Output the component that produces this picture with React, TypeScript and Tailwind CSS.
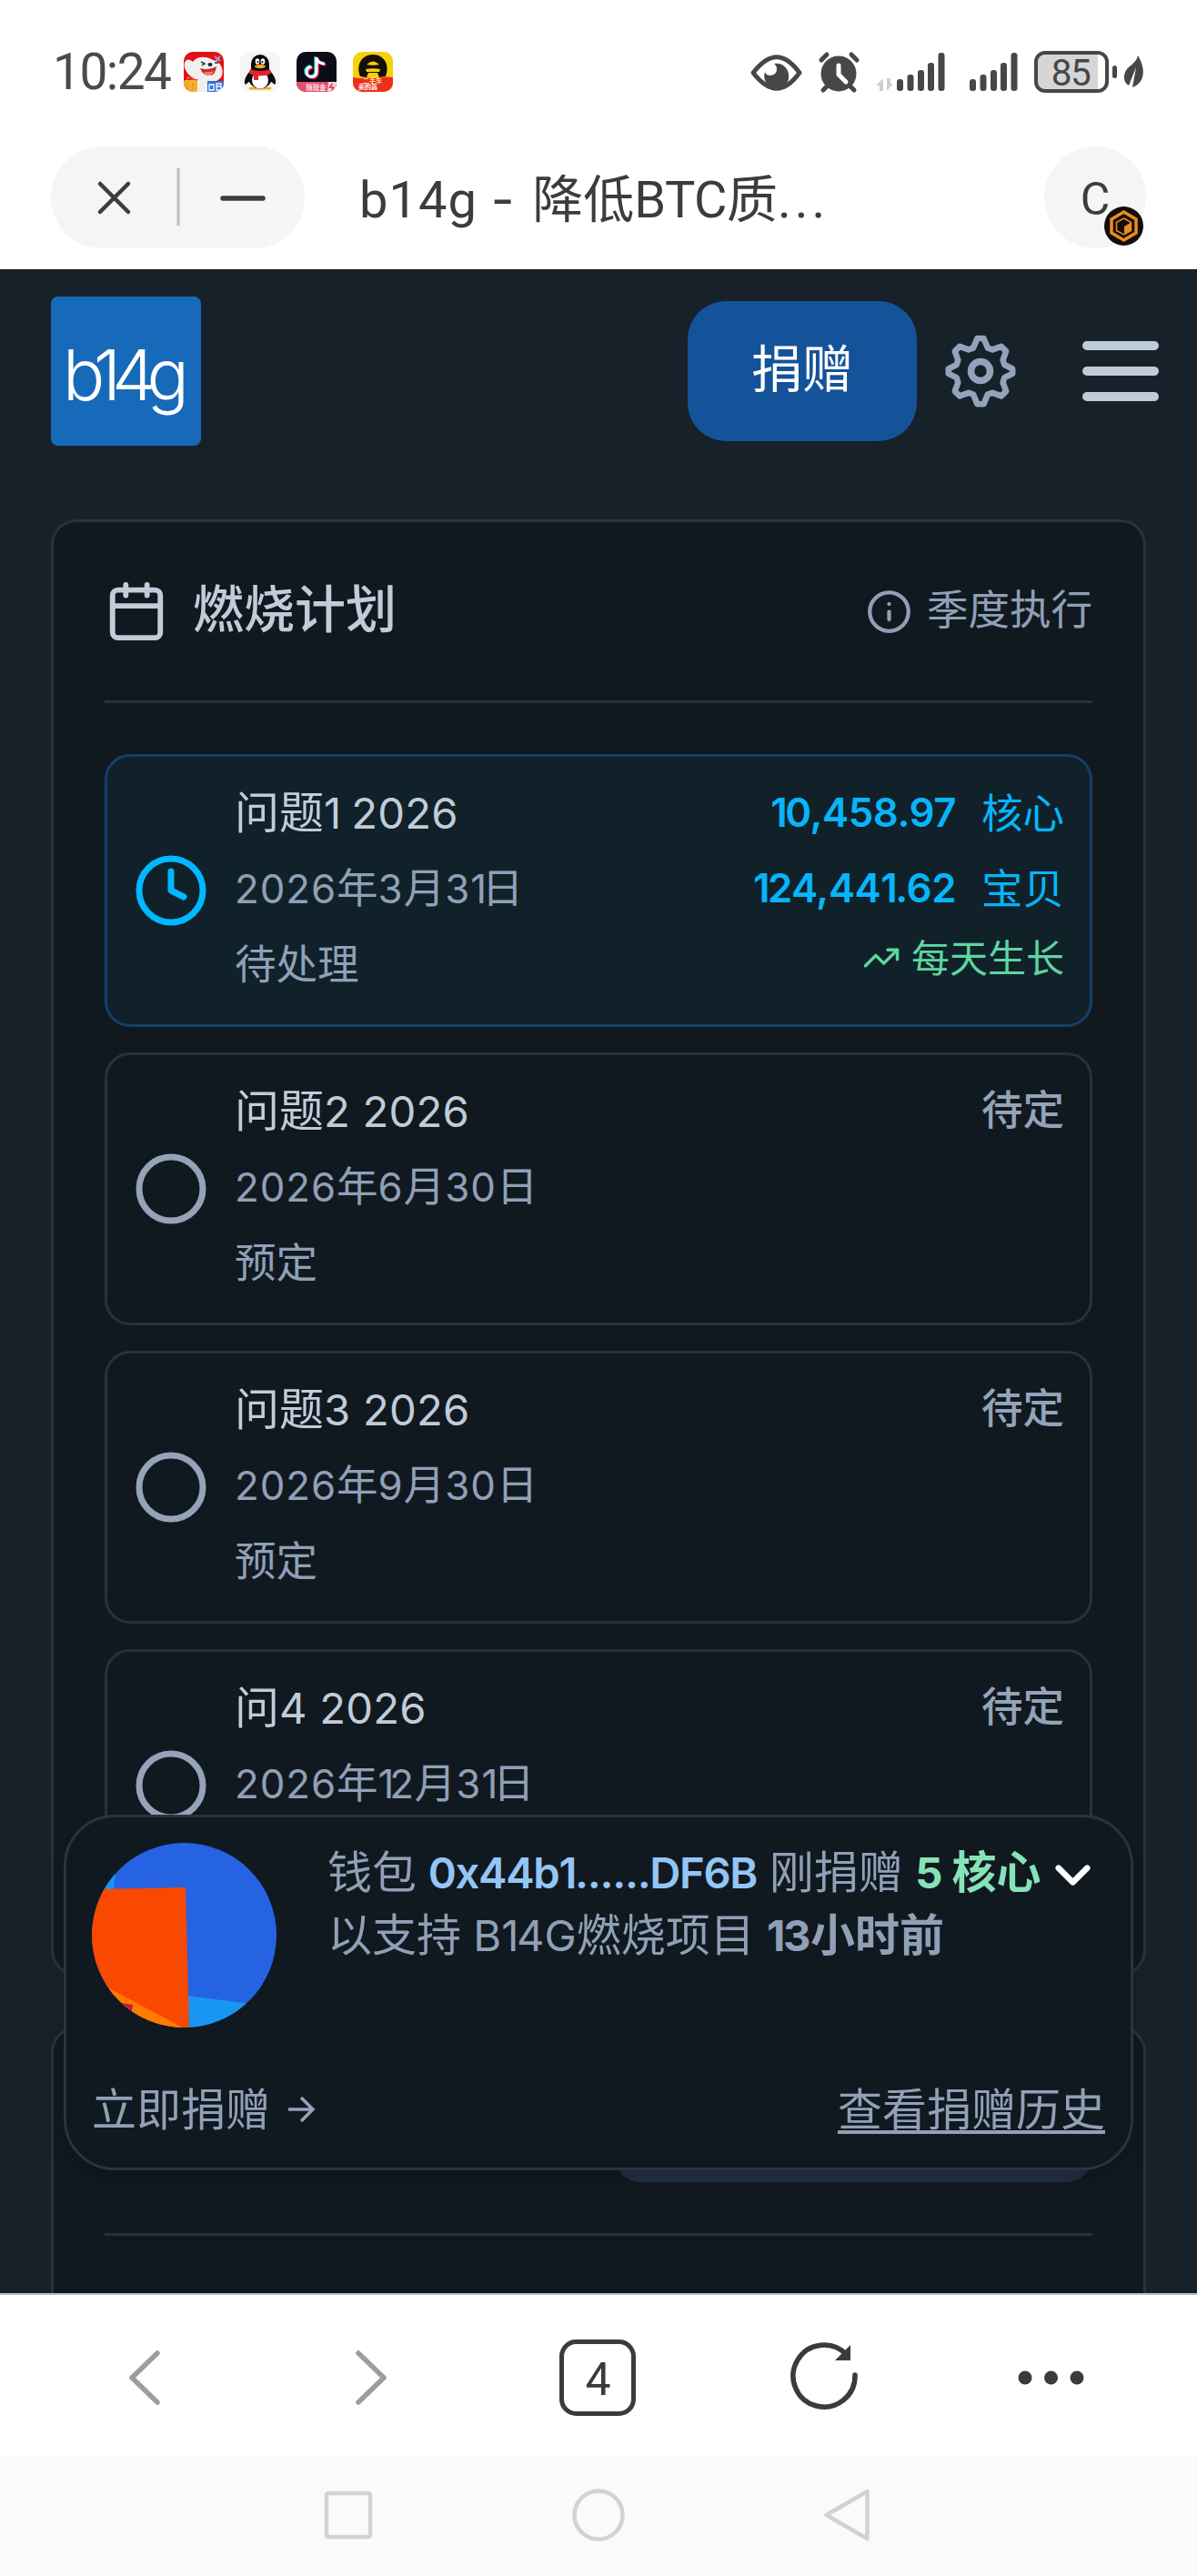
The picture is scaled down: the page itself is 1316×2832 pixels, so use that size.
import { ReactNode } from "react";
import { Calendar, ChevronDown, Circle, Clock, Info, TrendingUp } from "lucide-react";

interface BurnRow {
  title: string;
  date: string;
  status: string;
  active?: boolean;
}

const ROWS: BurnRow[] = [
  { title: "问题1 2026", date: "2026年3月31日", status: "待处理", active: true },
  { title: "问题2 2026", date: "2026年6月30日", status: "预定" },
  { title: "问题3 2026", date: "2026年9月30日", status: "预定" },
  { title: "问4 2026", date: "2026年12月31日", status: "预定" },
];

interface MixedProps {
  text: string;
  latin?: string;
  one?: string;
}

// Latin runs are set slightly smaller than the Chinese text around them,
// and the digit 1 is kerned tighter than the rest
function Mixed({ text, latin = "tracking-[0.022em]", one = "tracking-[-0.12em]" }: MixedProps) {
  return (
    <span className="whitespace-pre">
      {text.split(/(1|[ -02-~]+)/).map((part, i) =>
        i % 2 ? (
          <span key={i} className={`font-['Inter',sans-serif] text-[0.963em] ${part === "1" ? one : latin}`}>
            {part}
          </span>
        ) : (
          part
        ),
      )}
    </span>
  );
}

function AppIcons() {
  return (
    <svg width="230" height="44" viewBox="0 0 230 44">
      <defs>
        <clipPath id="app1"><rect width="44" height="44" rx="10" /></clipPath>
        <clipPath id="app3"><rect x="124" width="44" height="44" rx="10" /></clipPath>
        <clipPath id="app4"><rect x="186" width="44" height="44" rx="10" /></clipPath>
      </defs>
      <g clipPath="url(#app1)">
        <rect width="44" height="44" fill="#e60f14" />
        <path d="M34 5l6 5M40 5l-5 6" stroke="#8fa3cc" strokeWidth="2" />
        <path d="M12 44V30C4 25-1 18 1 12c2-5 6-4 9-1C14 5 24 4 32 9c9 2 12 10 10 17-1 3-4 5-6 6l6 5v7z" fill="#f1eff0" />
        <path d="M4 27q8 4 12 3l-3 4q-6-1-9-5z" fill="#d8232a" />
        <path d="M18 18q9 3 18-2-1 10-8 10-7 0-10-8z" fill="#c92d2b" />
        <path d="M22 22q6 1 11-1-2 5-5 5-4 0-6-4z" fill="#f0807c" />
        <ellipse cx="29" cy="14" rx="2.500" ry="2" fill="#222" />
        <path d="M19 11l4 2-3 2M34 12l4 0" stroke="#333" strokeWidth="1.500" fill="none" />
        <rect y="31" width="15" height="13" rx="2" fill="#f6ae2d" />
        <path d="M4 31v-3h6v3M4 34v8M10 34v8" stroke="#e08d17" fill="none" />
        <rect x="26" y="32" width="18" height="12" fill="#2e74d8" />
        <path d="M28 36h5v6h-5zM36 35h5v7h-5zM36 38h5" stroke="#fff" strokeWidth="1.300" fill="none" />
      </g>
      <g>
        <rect x="62" width="44" height="44" rx="10" fill="#f5f5f5" />
        <path d="M73 21c-5 5-8 13-5 15l6-5M95 21c5 5 8 13 5 15l-6-5" fill="#0b0b0b" />
        <path d="M72 39q-2 3 5 2.500h14q7 .5 5-2.500z" fill="#f5a81c" />
        <ellipse cx="84" cy="28" rx="13" ry="12.500" fill="#0b0b0b" />
        <ellipse cx="84" cy="31" rx="9" ry="9.500" fill="#fff" />
        <path d="M74 20V13a10 10 0 0 1 20 0v7z" fill="#0b0b0b" />
        <ellipse cx="81" cy="10.500" rx="2.300" ry="3.200" fill="#fff" />
        <ellipse cx="87" cy="10.500" rx="2.300" ry="3.200" fill="#fff" />
        <circle cx="81.500" cy="11" r="1" />
        <circle cx="86.500" cy="11" r="1" />
        <ellipse cx="84" cy="16" rx="6" ry="2.200" fill="#f5a81c" />
        <path d="M73 19q11 4 22 0l1 5q-8 3-14 2.500v4.500h-5v-5.500l-5-1.500z" fill="#e3242b" />
      </g>
      <g clipPath="url(#app3)">
        <rect x="124" width="44" height="44" fill="#0c0c16" />
        <g fill="none" strokeWidth="3">
          <path d="M146 6v16a5.500 5.500 0 1 1-5.500-5.500M146 7q2 6 9 6" stroke="#25e3e6" transform="translate(-1.200 -.8)" />
          <path d="M146 6v16a5.500 5.500 0 1 1-5.500-5.500M146 7q2 6 9 6" stroke="#f5315b" transform="translate(1.200 1)" />
          <path d="M146 6v16a5.500 5.500 0 1 1-5.500-5.500M146 7q2 6 9 6" stroke="#fff" />
        </g>
        <path d="M124 33h44v11h-44z" fill="#e2506f" />
        <path d="M159 33h9v11h-10z" fill="#f9d4d8" />
        <path d="M163.500 35l-3 4h4l-2 4" stroke="#e2304f" strokeWidth="1.500" fill="none" />
        <text x="134" y="41.500" fontSize="7.500" fontWeight="500" fill="#fff" fontFamily="Noto Sans CJK SC, sans-serif">领现金</text>
      </g>
      <g clipPath="url(#app4)">
        <rect x="186" width="44" height="44" fill="#f7cf0a" />
        <path d="M194 27c-5-13 2-24 14-24s19 11 14 24l-7 1-2-5h-10l-2 5z" fill="#141008" />
        <path d="M201 14q7-7 14 0-7 1.500-14 0zM200 19q8-1.500 16 0l-1 3h-14z" fill="#f7cf0a" />
        <path d="M186 28q10 2 14 0 8 2 15 0 8-1 15 0v16h-44z" fill="#ee2f1c" />
        <text x="197" y="34" fontSize="7" fontWeight="700" fill="#ffe7a0" fontFamily="Noto Sans CJK SC, sans-serif">二手车</text>
        <text x="192" y="41" fontSize="7" fontWeight="700" fill="#fff" fontFamily="Noto Sans CJK SC, sans-serif">卖的高</text>
      </g>
    </svg>
  );
}

function StatusIcons() {
  return (
    <svg width="436" height="48" viewBox="824 54 436 48" fill="#474747">
      <path d="M828 79c18-23 34-23 51 0-17 23-33 23-51 0z" fill="none" stroke="#474747" strokeWidth="5" strokeLinejoin="round" />
      <path d="M851 69a13.500 14 0 1 1-10 9q1 4 6 4 7-1 7-7 0-4-3-6z" />
      <circle cx="922" cy="80" r="19.500" />
      <path d="M903 65l6-6M942 65l-6-6M910 93l-5 5M934 93l5 5" stroke="#474747" strokeWidth="5" strokeLinecap="round" />
      <path d="M922 71v10l8 8" stroke="#fff" strokeWidth="5" strokeLinecap="round" fill="none" />
      <path d="M971 99V85l-8 8h4v6zM975 85v14l7-8h-3v-6z" fill="#cfcfcf" />
      {[0, 80].map((dx) => (
        <g key={dx}>
          <rect x={986 + dx} y="86" width="7" height="13" rx="3" />
          <rect x={997.5 + dx} y="81" width="7" height="18" rx="3" />
          <rect x={1009 + dx} y="76" width="7" height="23" rx="3" />
          <rect x={1020 + dx} y="68" width="7" height="31" rx="3" />
          <rect x={1031.5 + dx} y="57" width="7" height="42" rx="3" />
        </g>
      ))}
      <path d="M1150 58h57v40h-57q-9-1-9-9V67q0-9 9-9z" fill="#d6d6d6" />
      <rect x="1139" y="57" width="78" height="42" rx="10" fill="none" stroke="#474747" strokeWidth="4" />
      <rect x="1223" y="71" width="5" height="14" rx="2.500" />
      <text x="1177" y="93" textAnchor="middle" fontSize="40.500" letterSpacing="-1.500" fontFamily="Roboto, sans-serif">85</text>
      <path d="M1251 60c9 15 8 30-6 35l4-22-8 20c-7-4-7-15 1-21q8-6 9-12z" />
    </svg>
  );
}

function BrowserHeader() {
  return (
    <header className="h-[296px] shrink-0 bg-white">
      <div className="flex h-[158px] items-center justify-between pl-[58px] pr-14">
        <div className="flex items-center gap-[13px]">
          <span className="w-[131px] whitespace-nowrap font-['Roboto','Noto_Sans_CJK_SC',sans-serif] text-[55px] leading-none tracking-[-1.5px] text-[#4a4a4a]">
            10:24
          </span>
          <AppIcons />
        </div>
        <StatusIcons />
      </div>
      <div className="flex h-[118px] items-center pl-14 pr-14">
        <div className="flex h-28 w-[279px] shrink-0 items-center rounded-full bg-[#f4f5f7]">
          <svg width="279" height="112" fill="none" stroke="#3c3c3c" strokeLinecap="round">
            <path d="M54 41l31 31M85 41l-31 31" strokeWidth="4.500" />
            <path d="M140 24v63" stroke="#bdbdbd" strokeWidth="3" strokeLinecap="butt" />
            <path d="M189 57h44" strokeWidth="5.500" />
          </svg>
        </div>
        <h1 className="ml-[60px] mt-[5px] whitespace-pre font-['Roboto','Noto_Sans_CJK_SC',sans-serif] text-[56px] leading-none text-[#3c3c3c]">
          <span className="tracking-[1px]">b14g </span>
          <span className="font-['Inter',sans-serif] tracking-[2px]">- </span>
          降低<span className="tracking-[-0.5px]">BTC</span>质<span className="tracking-[4px]">...</span>
        </h1>
        <div className="relative ml-auto flex size-28 items-center justify-center rounded-full bg-[#f4f5f7] pt-1 font-['Roboto',sans-serif] text-[50px] text-[#3c3c3c]">
          C
          <svg className="absolute bottom-[3px] right-[3px]" width="43" height="43" viewBox="0 0 43 43">
            <circle cx="21.500" cy="21.500" r="21.500" fill="#120d08" />
            <path d="M21.500 6l13.500 8v15l-13.500 8-13.500-8V14z" fill="none" stroke="#f08a1d" strokeWidth="3.500" />
            <path d="M21.500 13l8 4.500v9l-8 4.500-8-4.500v-9z" fill="none" stroke="#f08a1d" strokeWidth="1.500" />
            <path d="M22 22l7.500-4.500v9L22 31z" fill="#f08a1d" />
          </svg>
        </div>
      </div>
    </header>
  );
}

function SiteNav() {
  return (
    <nav className="flex h-[224px] shrink-0 items-center pl-14 pr-[42px]">
      <div className="flex h-[164px] w-[165px] items-center justify-center rounded-lg bg-[#176ab9]">
        <span className="mr-2.5 mt-2 whitespace-nowrap font-['Inter',sans-serif] text-[77px] font-light leading-none tracking-[-10px] text-white">
          b14g
        </span>
      </div>
      <button className="ml-auto h-[154px] w-[252px] rounded-[42px] bg-[#14539a] pb-3 text-[56px] text-white">捐赠</button>
      <svg className="ml-7" width="84" height="84" viewBox="0 0 84 84" fill="none" stroke="#94a3bb" strokeWidth="7.500" strokeLinejoin="round">
        <path d="M38 4h8l5 12 6 2 11-4 6 6-4 11 2 6 10 5v6l-10 5-2 6 4 11-6 6-11-4-6 2-5 12h-8l-5-12-6-2-11 4-6-6 4-11-2-6L2 48v-6l10-5 2-6-4-11 6-6 11 4 6-2z" transform="translate(5 2.500) scale(.88)" />
        <circle cx="42" cy="42" r="10.500" />
      </svg>
      <div className="ml-[70px] flex w-[84px] flex-col gap-[18px]">
        <span className="h-2.5 rounded-full bg-[#bfcbd9]" />
        <span className="h-2.5 rounded-full bg-[#bfcbd9]" />
        <span className="h-2.5 rounded-full bg-[#bfcbd9]" />
      </div>
    </nav>
  );
}

function Amount({ value, unit }: { value: string; unit: string }) {
  return (
    <div className="flex h-[83px] items-center gap-7 text-[#08b4fb]">
      <span className="font-semibold">
        <Mixed text={value} latin="tracking-[-0.01em]" one="tracking-[-0.06em]" />
      </span>
      <span>{unit}</span>
    </div>
  );
}

function Row({ row }: { row: BurnRow }) {
  return (
    <li
      className={`flex h-[300px] items-center rounded-[28px] border-[3px] px-7 text-[45.5px] leading-none ${
        row.active ? "border-[#153f68] bg-[#102129]" : "border-[#26323f] bg-[#111920]"
      }`}
    >
      {row.active ? (
        <Clock className="size-[84px] text-[#00b8ff]" />
      ) : (
        <Circle className="size-[84px] text-[#94a3b8]" />
      )}
      <div className="ml-7 h-[256px] text-[#90a0b7]">
        <div className="flex h-[81px] items-center text-[49px] text-[#c0ccd9]">
          <Mixed text={row.title} latin="tracking-[0.005em]" one="tracking-[-0.05em]" />
        </div>
        <div className="flex h-[86px] items-center">
          <Mixed text={row.date} />
        </div>
        <div className="flex h-[80px] items-center">{row.status}</div>
      </div>
      <div className="ml-auto flex h-[258px] flex-col items-end">
        {row.active ? (
          <>
            <Amount value="10,458.97" unit="核心" />
            <Amount value="124,441.62" unit="宝贝" />
            <div className="flex h-[70px] items-center gap-3 text-[42px] text-[#5dd6a0]">
              <TrendingUp className="mt-1 size-[42px]" />
              每天生长
            </div>
          </>
        ) : (
          <div className="flex h-[80px] items-center font-medium text-[#94a3b8]">待定</div>
        )}
      </div>
    </li>
  );
}

function Card({ children }: { children: ReactNode }) {
  return <section className="mx-14 shrink-0 rounded-[28px] border-[3px] border-[#26323f] bg-[#111920] p-14">{children}</section>;
}

function DonationToast() {
  return (
    <div className="absolute left-[70px] top-[1699px] h-[391px] w-[1176px] rounded-[56px] border-[3px] border-[#28343f] bg-[#111920] px-7 pt-7 text-[49px] text-[#90a0b7] shadow-xl">
      <div className="flex">
        <svg width="203" height="203" viewBox="0 0 203 203">
          <clipPath id="avatar"><circle cx="101.500" cy="101.500" r="101.500" /></clipPath>
          <g clipPath="url(#avatar)">
            <rect width="203" height="203" fill="#2563e3" />
            <path d="M0 30h26l-2 22H0z" fill="#1896f2" />
            <path d="M105 168l70 9v26h-70z" fill="#1896f2" />
            <path d="M0 51l103-2 4 154H0z" fill="#f94800" />
            <path d="M0 150l100 53H0z" fill="#ff7b00" />
            <path d="M20 174l25 4-2 12H20z" fill="#c8183d" />
          </g>
        </svg>
        <div className="-mt-[4px] ml-[56px] leading-none">
          <p className="flex h-[69px] items-center whitespace-pre">
            <Mixed text="钱包 " latin="tracking-[-0.01em]" />
            <span className="font-semibold text-[#93c5f5]">
              <Mixed text="0x44b1......DF6B" latin="tracking-[-0.028em]" one="tracking-[-0.05em]" />
            </span>
            <Mixed text=" 刚捐赠 " latin="tracking-[0.005em]" />
            <b className="text-[#86e3b8]">
              <Mixed text="5 核心" latin="tracking-[-0.01em]" />
            </b>
          </p>
          <p className="flex h-[69px] items-center whitespace-pre">
            <Mixed text="以支持 B14G燃烧项目 " latin="tracking-[0em]" one="tracking-[-0.05em]" />
            <b>
              <Mixed text="13小时前" latin="tracking-[-0.01em]" one="tracking-[-0.05em]" />
            </b>
          </p>
        </div>
        <ChevronDown className="absolute right-8 top-8 size-[63px] text-white" strokeWidth={2.5} />
      </div>
      <div className="mt-[50px] flex items-center justify-between">
        <span className="flex items-center gap-2">
          立即捐赠
          <svg width="50" height="50" viewBox="0 0 50 50" fill="none" stroke="#94a3b8" strokeWidth="3.500">
            <path d="M12 28h27M26 15l13 13-13 13" />
          </svg>
        </span>
        <span className="underline decoration-4 underline-offset-[5px] [text-decoration-skip-ink:none]">查看捐赠历史</span>
      </div>
    </div>
  );
}

function BrowserToolbar() {
  return (
    <footer>
      <div className="h-[179px] border-t-2 border-[#b9bcbe] bg-white">
        <svg width="1316" height="177" viewBox="0 2523 1316 177" fill="none" stroke="#3b3b3b">
          <path d="M173 2587l-28 27 28 27M394 2587l28 27-28 27" stroke="#9d9d9f" strokeWidth="5.500" strokeLinecap="round" strokeLinejoin="round" />
          <rect x="617.500" y="2574.500" width="79" height="79" rx="16" strokeWidth="5" />
          <text x="657.500" y="2633" fontSize="50" textAnchor="middle" fill="#3b3b3b" stroke="none" fontFamily="Roboto, sans-serif">4</text>
          <path d="M940 2611a34 34 0 1 1-9-22" strokeWidth="5.500" strokeLinecap="round" />
          <path d="M935 2578v17h-17z" fill="#3b3b3b" stroke="none" />
          <g fill="#3b3b3b" stroke="none">
            <circle cx="1127" cy="2614" r="7.500" />
            <circle cx="1155.500" cy="2614" r="7.500" />
            <circle cx="1184" cy="2614" r="7.500" />
          </g>
        </svg>
      </div>
      <div className="h-[132px] bg-[#fafafa]">
        <svg width="1316" height="132" viewBox="0 2700 1316 132" fill="none" stroke="#d2d2d2" strokeWidth="4.500" strokeLinejoin="round">
          <rect x="359" y="2741" width="48" height="48" rx="2" />
          <circle cx="658" cy="2765" r="26.500" />
          <path d="M953.500 2739v52l-45-26z" />
        </svg>
      </div>
    </footer>
  );
}

export default function App() {
  return (
    <div className="flex h-[2832px] w-[1316px] flex-col overflow-hidden font-['Noto_Sans_CJK_SC',sans-serif]">
      <BrowserHeader />
      <main className="relative flex h-[2225px] flex-col overflow-hidden bg-[#17212a]">
        <SiteNav />
        <div className="mt-[51px] flex flex-col gap-14">
          <Card>
            <div className="flex h-[84px] items-center justify-between">
              <h2 className="flex items-center gap-[27px] text-[56px] font-medium leading-none text-[#c0ccd9]">
                <Calendar className="size-[70px]" />
                <span className="-mt-3">燃烧计划</span>
              </h2>
              <span className="flex items-center gap-4 text-[45.5px] leading-none text-[#90a0b7]">
                <Info className="size-[51px]" />
                <span className="-mt-2">季度执行</span>
              </span>
            </div>
            <ul className="mt-14 flex flex-col gap-7 border-t-[3px] border-[#26323f] pt-14">
              {ROWS.map((row) => (
                <Row key={row.title} row={row} />
              ))}
            </ul>
          </Card>
          <Card>
            <div className="flex h-28 justify-end">
              <div className="w-[525px] rounded-[28px] bg-[#223040]" />
            </div>
            <div className="mt-14 h-40 border-t-[3px] border-[#26323f]" />
          </Card>
        </div>
        <DonationToast />
      </main>
      <BrowserToolbar />
    </div>
  );
}
